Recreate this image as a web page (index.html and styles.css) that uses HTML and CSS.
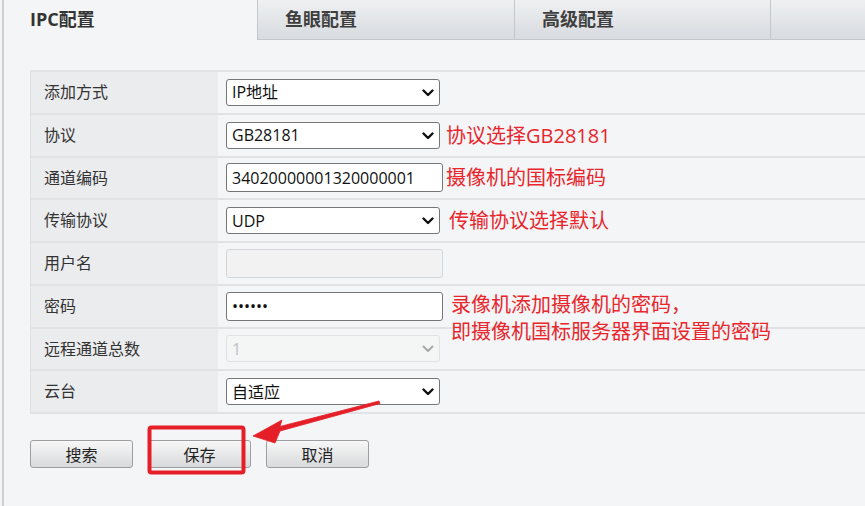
FILE: index.html
```html
<!DOCTYPE html>
<html lang="zh-CN">
<head>
<meta charset="utf-8">
<title>IPC配置</title>
<link rel="stylesheet" href="styles.css">
</head>
<body>
<div class="page">
  <div class="tabs">
    <div class="tab active">IPC配置</div>
    <div class="tab">鱼眼配置</div>
    <div class="tab narrow">高级配置</div>
    <div class="tab filler"></div>
  </div>
  <div class="content">
    <div class="form">
      <div class="row">
        <div class="label">添加方式</div>
        <div class="value">
          <span class="sel"><select><option>IP地址</option></select><svg class="chev" viewBox="0 0 12 8" width="12" height="8"><path d="M1.5 1.5 L6 6 L10.5 1.5"/></svg></span>
        </div>
      </div>
      <div class="row">
        <div class="label">协议</div>
        <div class="value">
          <span class="sel"><select><option>GB28181</option></select><svg class="chev" viewBox="0 0 12 8" width="12" height="8"><path d="M1.5 1.5 L6 6 L10.5 1.5"/></svg></span>
          <span class="note note-a">协议选择GB28181</span>
        </div>
      </div>
      <div class="row">
        <div class="label">通道编码</div>
        <div class="value">
          <input class="txt" type="text" value="34020000001320000001">
          <span class="note note-b">摄像机的国标编码</span>
        </div>
      </div>
      <div class="row">
        <div class="label">传输协议</div>
        <div class="value">
          <span class="sel"><select><option>UDP</option></select><svg class="chev" viewBox="0 0 12 8" width="12" height="8"><path d="M1.5 1.5 L6 6 L10.5 1.5"/></svg></span>
          <span class="note note-c">传输协议选择默认</span>
        </div>
      </div>
      <div class="row">
        <div class="label">用户名</div>
        <div class="value">
          <input class="txt" type="text" value="" disabled>
        </div>
      </div>
      <div class="row">
        <div class="label">密码</div>
        <div class="value">
          <input class="txt" type="password" value="123456">
          <span class="note note-d">录像机添加摄像机的密码，<br>即摄像机国标服务器界面设置的密码</span>
        </div>
      </div>
      <div class="row">
        <div class="label">远程通道总数</div>
        <div class="value">
          <span class="sel disabled"><select disabled><option>1</option></select><svg class="chev" viewBox="0 0 12 8" width="12" height="8"><path d="M1.5 1.5 L6 6 L10.5 1.5"/></svg></span>
        </div>
      </div>
      <div class="row">
        <div class="label">云台</div>
        <div class="value">
          <span class="sel"><select><option>自适应</option></select><svg class="chev" viewBox="0 0 12 8" width="12" height="8"><path d="M1.5 1.5 L6 6 L10.5 1.5"/></svg></span>
        </div>
      </div>
    </div>
    <div class="buttons">
      <button class="btn" type="button">搜索</button>
      <button class="btn" type="button">保存</button>
      <button class="btn" type="button">取消</button>
    </div>
  </div>
</div>
<svg class="overlay" viewBox="0 0 865 506" width="865" height="506">
  <rect x="149.5" y="427.5" width="94" height="45" rx="2" fill="none" stroke="#e41f27" stroke-width="4"/>
  <polygon points="379,401 280,426.5 282,420 253,436 275,443 280,431 380,403.5" fill="#e41f27" stroke="#e41f27" stroke-width="0.8" stroke-linejoin="round"/>
</svg>
</body>
</html>
```

FILE: styles.css
```css
* { box-sizing: border-box; }

html, body {
  margin: 0;
  padding: 0;
}

body {
  position: relative;
  width: 865px;
  height: 506px;
  overflow: hidden;
  background: #f4f5f7;
  font-family: "Open Sans", "Noto Sans CJK SC", sans-serif;
  color: #333;
}

.page {
  margin-left: 2px;
  border-left: 2px solid #cdd0d3;
  height: 506px;
}

.tabs {
  display: flex;
  height: 40px;
}

.tab {
  flex: none;
  width: 257px;
  height: 40px;
  padding-left: 27px;
  font-size: 18px;
  font-weight: 700;
  line-height: 38px;
  color: #3f3f3f;
  background: linear-gradient(#eef0f2, #d8dbdf);
  border-left: 1px solid #c3c6ca;
  border-bottom: 1px solid #c3c6ca;
}

.tab.narrow { width: 256px; }

.tab.active {
  width: 253px;
  padding-left: 26px;
  background: transparent;
  border: none;
  color: #333;
}

.tab.filler {
  flex: 1;
  padding: 0;
}

.content {
  padding: 30px 0 0 26px;
}

.form {
  border-left: 1px solid #e0e1e4;
  border-bottom: 2px solid #e1e2e5;
}

.row {
  display: flex;
  height: 42.75px;
  border-top: 2px solid #e1e2e5;
}

.label {
  flex: none;
  width: 187px;
  padding-left: 13px;
  background: #ebecee;
  font-size: 16px;
  line-height: 40px;
  color: #333;
}

.value {
  flex: 1;
  display: flex;
  align-items: center;
  padding-left: 8px;
  white-space: nowrap;
}

.sel {
  position: relative;
  display: inline-block;
  width: 214px;
  height: 27px;
  flex: none;
}

.sel select {
  -webkit-appearance: none;
  appearance: none;
  width: 214px;
  height: 27px;
  margin: 0;
  padding: 0 0 0 5px;
  border: 1px solid #767676;
  border-radius: 3px;
  background: #fff;
  font-family: "Open Sans", "Noto Sans CJK SC", sans-serif;
  font-size: 16px;
  color: #111;
}

.sel.disabled select {
  background: #f5f5f5;
  border-color: #d9dadc;
  color: #aaa;
}

.chev {
  position: absolute;
  right: 6px;
  top: 10px;
  pointer-events: none;
}

.chev path {
  fill: none;
  stroke: #111;
  stroke-width: 2.4;
  stroke-linecap: round;
  stroke-linejoin: round;
}

.sel.disabled .chev path {
  stroke: #a9a9a9;
  stroke-width: 2;
}

.txt {
  flex: none;
  width: 217px;
  height: 29px;
  margin: 0;
  padding: 0 0 0 5px;
  border: 1px solid #767676;
  border-radius: 3px;
  background: #fff;
  font-family: "Open Sans", "Noto Sans CJK SC", sans-serif;
  font-size: 16px;
  color: #111;
}

.txt:disabled {
  background: #f2f2f3;
  border-color: #d4d5d8;
}

.note {
  font-size: 20px;
  line-height: 27px;
  color: #e8262c;
}

.note-a { margin-left: 6px; }
.note-b { margin-left: 3px; }
.note-c { margin-left: 9px; }
.note-d {
  align-self: flex-start;
  margin-top: 5px;
  margin-left: 8px;
}

.buttons {
  display: flex;
  gap: 15px;
  margin-top: 26px;
}

.btn {
  width: 103px;
  height: 28px;
  margin: 0;
  padding: 0;
  border: 1px solid #9c9ea1;
  border-radius: 3px;
  background: linear-gradient(#f7f7f7, #d9dadc);
  font-family: "Open Sans", "Noto Sans CJK SC", sans-serif;
  font-size: 16px;
  color: #222;
}

.overlay {
  position: absolute;
  left: 0;
  top: 0;
  pointer-events: none;
}
```
